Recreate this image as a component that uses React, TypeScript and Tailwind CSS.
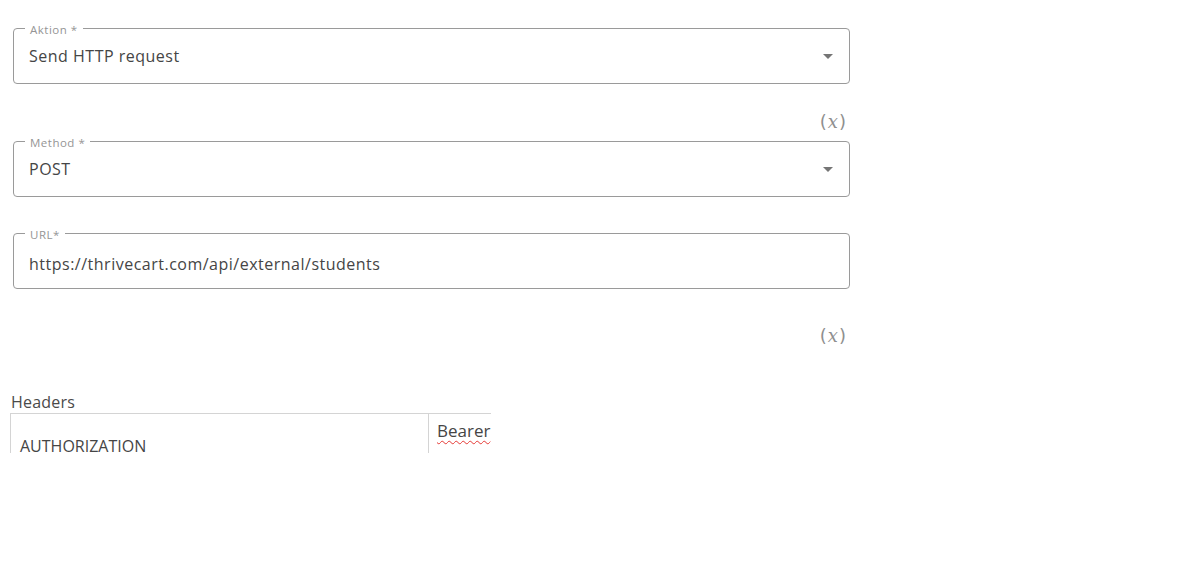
import { ReactNode } from 'react'

const FONT = { fontFamily: '"Open Sans", "Noto Sans", Arial, sans-serif' }

function Caret() {
  return (
    <svg width="24" height="24" viewBox="0 0 24 24" className="fill-[#757575]">
      <path d="M7 10l5 5 5-5z" />
    </svg>
  )
}

function Outlined({ label, children, select, shift }: { label: string; children: ReactNode; select?: boolean; shift?: boolean }) {
  return (
    <div className="relative h-[56px] border border-[#9a9a9a] rounded-[4px] flex items-center pl-[15px] pr-[9px]">
      <span className="absolute -top-[6px] left-[11px] px-[5px] bg-white text-[11.5px] leading-[13px] text-[#959595] tracking-[0.5px]">
        {label}
      </span>
      <span className={`flex-1 text-[16px] text-[#454545] tracking-[0.5px] ${shift ? 'pt-[6px]' : ''}`}>{children}</span>
      {select && <Caret />}
    </div>
  )
}

function VarToggle() {
  return (
    <div className="flex justify-end pr-[4px] h-[24px] items-center">
      <span className="text-[18px] leading-[24px] text-[#8f8f8f]" style={{ fontFamily: '"DejaVu Sans", "Liberation Sans", sans-serif' }}>
        (<span className="italic px-[1px]" style={{ fontFamily: '"DejaVu Serif", serif' }}>x</span>)
      </span>
    </div>
  )
}

export default function App() {
  return (
    <div className="w-[1190px] h-[568px] bg-white" style={FONT}>
      <div className="w-[837px] ml-[13px] pt-[28px]">
        <Outlined label="Aktion *" select>Send HTTP request</Outlined>
        <div className="h-[57px] pt-[26px]">
          <VarToggle />
        </div>
        <Outlined label="Method *" select>POST</Outlined>
        <div className="h-[36px]" />
        <Outlined label="URL*" shift>https://thrivecart.com/api/external/students</Outlined>
        <div className="pt-[35px]">
          <VarToggle />
        </div>
      </div>

      <div className="ml-[11px] mt-[44px] text-[16px] text-[#4a4a4a] leading-[21px] tracking-[0.2px]">Headers</div>
      <div className="ml-[10px] w-[481px] h-[40px] overflow-hidden border-t border-l border-[#d4d4d4] flex">
        <div className="w-[418px] border-r border-[#d4d4d4] pl-[9px] pt-[22px] text-[16px] text-[#454545] leading-[20px]">
          AUTHORIZATION
        </div>
        <div className="flex-1 pl-[8px] pt-[6px] text-[17px] text-[#454545] leading-[22px] whitespace-nowrap">
          <span className="underline decoration-wavy decoration-[#e53935] underline-offset-[3px] decoration-1">Bearer</span>
        </div>
      </div>
    </div>
  )
}
